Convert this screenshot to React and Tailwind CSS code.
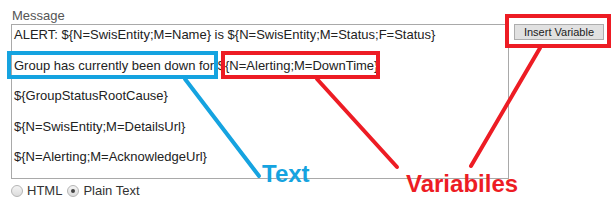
import React from 'react';

const lines = [
  'ALERT: ${N=SwisEntity;M=Name} is ${N=SwisEntity;M=Status;F=Status}',
  'Group has currently been down for ${N=Alerting;M=DownTime}',
  '${GroupStatusRootCause}',
  '${N=SwisEntity;M=DetailsUrl}',
  '${N=Alerting;M=AcknowledgeUrl}',
];

const Radio = ({ checked, label }) => (
  <label className="flex items-center">
    <span className="w-[12px] h-[12px] rounded-full border border-[#b5b5b5] bg-gradient-to-b from-[#f4f4f4] to-[#dcdcdc] flex items-center justify-center">
      {checked && <span className="w-[4px] h-[4px] rounded-full bg-[#444]" />}
    </span>
    <span className="ml-[4px] text-[13px] text-[#333] leading-[15px]">{label}</span>
  </label>
);

const App = () => {
  return (
    <div className="relative w-[614px] h-[222px] bg-white overflow-hidden" style={{ fontFamily: '"Liberation Sans", Arial, sans-serif' }}>
      <div className="pl-[11px] pt-[8px]">
        {/* Label */}
        <div className="text-[13px] leading-[15px] text-[#555] ml-[1px] mb-[1px]">Message</div>

        {/* Textarea + button */}
        <div className="flex items-start">
          <div className="w-[498px] h-[155px] border border-[#a9a9a9] pl-[2px] pt-[2px] text-[13px] leading-[15px] text-[#222]">
            {lines.map((line) => (
              <p key={line} className="mb-[15.5px] whitespace-nowrap">{line}</p>
            ))}
          </div>
          <button className="ml-[5px] w-[90px] h-[16px] bg-[#e1e1e1] border border-[#adadad] text-[11px] leading-[14px] text-[#222]">
            Insert Variable
          </button>
        </div>

        {/* Format */}
        <div className="flex items-center gap-[5px] mt-[4px]">
          <Radio label="HTML" />
          <Radio checked label="Plain Text" />
        </div>
      </div>

      {/* Annotations */}
      <svg className="absolute inset-0 pointer-events-none" width="614" height="222" viewBox="0 0 614 222">
        <rect x="9" y="53" width="207" height="24" fill="none" stroke="#15a3e0" strokeWidth="4" />
        <line x1="185" y1="79" x2="259" y2="176" stroke="#15a3e0" strokeWidth="4" strokeLinecap="round" />
        <rect x="223" y="53" width="155" height="24" fill="none" stroke="#ed1c24" strokeWidth="4" />
        <rect x="507" y="16" width="102" height="30" fill="none" stroke="#ed1c24" strokeWidth="4" />
        <line x1="317" y1="79" x2="397" y2="167" stroke="#ed1c24" strokeWidth="4" strokeLinecap="round" />
        <line x1="540" y1="48" x2="471" y2="166" stroke="#ed1c24" strokeWidth="4" strokeLinecap="round" />
      </svg>
      <div className="absolute left-[262px] top-[162px] text-[24px] leading-[24px] font-bold text-[#15a3e0]">Text</div>
      <div className="absolute left-[406px] top-[172px] text-[24px] leading-[24px] font-bold text-[#ed1c24]">Variabiles</div>
    </div>
  );
};

export default App;
